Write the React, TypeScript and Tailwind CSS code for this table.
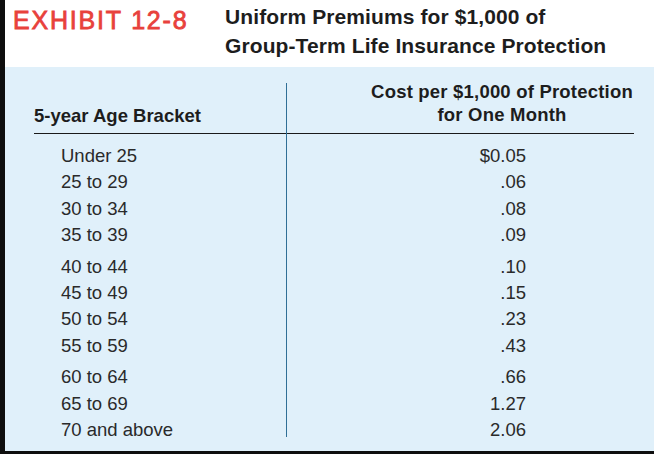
const groups: Array<Array<[string, string]>> = [
  [
    ['Under 25', '$0.05'],
    ['25 to 29', '.06'],
    ['30 to 34', '.08'],
    ['35 to 39', '.09'],
  ],
  [
    ['40 to 44', '.10'],
    ['45 to 49', '.15'],
    ['50 to 54', '.23'],
    ['55 to 59', '.43'],
  ],
  [
    ['60 to 64', '.66'],
    ['65 to 69', '1.27'],
    ['70 and above', '2.06'],
  ],
];

export default function App() {
  return (
    <div
      className="w-[654px] h-[454px] bg-[#0e0e0e] flex flex-col pl-[5px] pb-[3px] overflow-hidden"
      style={{ fontFamily: '"Liberation Sans", Arial, sans-serif' }}
    >
      {/* exhibit heading */}
      <div className="h-[67px] shrink-0 bg-white flex">
        <div className="w-[220px] pl-[8px] pt-[6px] text-[25px] leading-[29px] tracking-[1.8px] text-[#e8413c] [-webkit-text-stroke:0.8px_#e8413c]">
          EXHIBIT 12-8
        </div>
        <div className="pt-[2px] text-[21px] leading-[29px] font-bold tracking-[0.1px] text-[#1d1d1d]">
          <div>Uniform Premiums for $1,000 of</div>
          <div>Group-Term Life Insurance Protection</div>
        </div>
      </div>

      {/* table */}
      <div className="flex-1 bg-[#e0f0fa] pt-[13px] flex text-[18.5px]">
        <div className="w-[282px] shrink-0 h-[354px] mt-[3px] border-r border-[#2f6f96]">
          <div className="h-[50px] flex items-end pl-[29px] pb-[6px] font-bold leading-[23px] text-[#1d1d1d]">
            5-year Age Bracket
          </div>
          <div className="ml-[29px] h-px bg-[#1a1a1a]" />
          <div className="pt-[9px] pl-[56px] flex flex-col gap-[5px] text-[#2a2a2a]">
            {groups.map((g, i) => (
              <div key={i} className="flex flex-col">
                {g.map(([age]) => (
                  <div key={age} className="h-[26.4px] leading-[26.4px] whitespace-nowrap">
                    {age}
                  </div>
                ))}
              </div>
            ))}
          </div>
        </div>

        <div className="flex-1">
          <div className="h-[53px] flex flex-col justify-end pl-[83px] pr-[20px] pb-[7px] text-center font-bold leading-[23px] tracking-[0.2px] text-[#1d1d1d]">
            <div className="whitespace-nowrap">Cost per $1,000 of Protection</div>
            <div>for One Month</div>
          </div>
          <div className="mr-[20px] h-px bg-[#1a1a1a]" />
          <div className="pt-[9px] pr-[128px] flex flex-col gap-[5px] text-right text-[#2a2a2a]">
            {groups.map((g, i) => (
              <div key={i} className="flex flex-col">
                {g.map(([age, cost]) => (
                  <div key={age} className="h-[26.4px] leading-[26.4px]">
                    {cost}
                  </div>
                ))}
              </div>
            ))}
          </div>
        </div>
      </div>
    </div>
  );
}
